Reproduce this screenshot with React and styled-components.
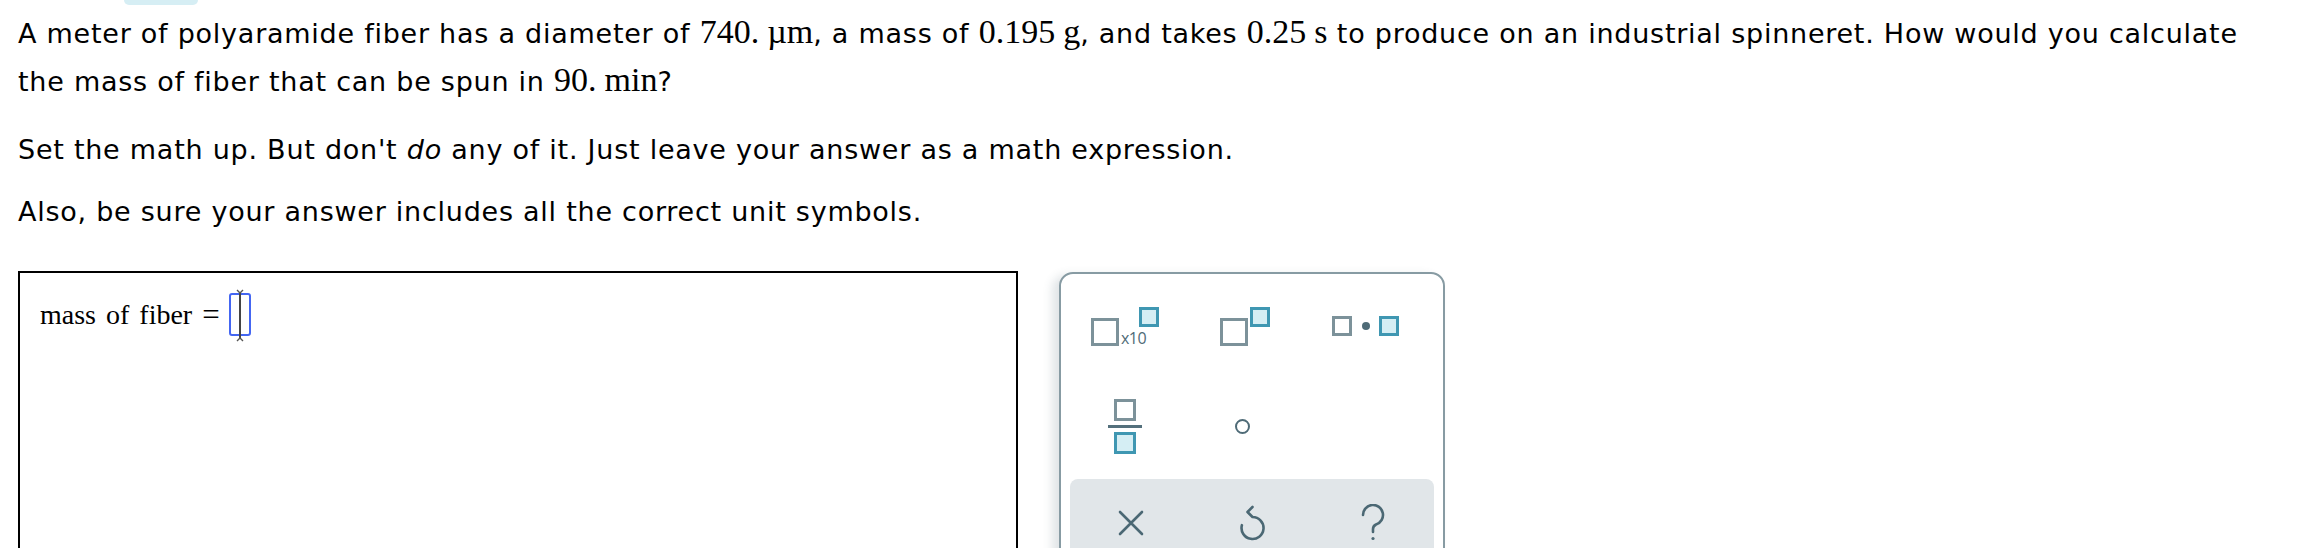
import React from 'react';
import styled, { createGlobalStyle } from 'styled-components';

const GlobalStyle = createGlobalStyle`
  html, body {
    margin: 0;
    padding: 0;
    background: #ffffff;
  }
  body {
    font-family: "DejaVu Sans", Verdana, sans-serif;
    color: #000;
  }
`;

const Page = styled.div`
  width: 2322px;
  height: 548px;
  box-sizing: border-box;
  padding-left: 18px;
  overflow: hidden;
`;

const TopTab = styled.div`
  margin-left: 106px;
  width: 74px;
  height: 5px;
  background: #d6eef4;
  border-radius: 0 0 10px 10px;
`;

const Para = styled.p`
  margin: ${props => props.$top}px 0 0;
  max-width: 2245px;
  font-size: 27px;
  line-height: 48px;
  letter-spacing: 0.75px;
`;

const Num = styled.span`
  font-family: "Liberation Serif", "Times New Roman", serif;
  font-size: 34px;
  line-height: 1;
  letter-spacing: 0;
`;

const Unit = styled(Num)`
  margin-left: 8px;
`;

const Workspace = styled.div`
  display: flex;
  align-items: flex-start;
  gap: 41px;
  margin-top: 35px;
`;

const AnswerBox = styled.div`
  width: 1000px;
  height: 320px;
  box-sizing: border-box;
  border: 2px solid #000;
  padding: 20px 20px;
`;

const MathLine = styled.div`
  display: flex;
  align-items: center;
  height: 43px;
  font-family: "Liberation Serif", "Times New Roman", serif;
  font-size: 28px;
  word-spacing: 3px;
`;

const Equals = styled.span`
  margin: 0 9px 0 10px;
  font-size: 31px;
`;

const Slot = styled.span`
  position: relative;
  display: block;
  width: 22px;
  height: 43px;
  box-sizing: border-box;
  border: 2px solid #4466f2;
  border-radius: 3px;
`;

const Caret = styled.svg`
  position: absolute;
  left: 3px;
  top: -6px;
`;

const Palette = styled.div`
  width: 386px;
  height: 320px;
  margin-top: 1px;
  box-sizing: border-box;
  border: 2px solid #879ba3;
  border-radius: 14px;
  padding: 2px 9px 0;
  background: #fff;
  box-shadow: -7px 3px 10px rgba(70, 95, 105, 0.16);
`;

const KeyGrid = styled.div`
  display: grid;
  grid-template-columns: repeat(3, 120px);
  grid-auto-rows: 100px;
  margin-left: -5px;
`;

const Key = styled.div`
  display: flex;
  align-items: center;
  justify-content: center;
`;

const Group = styled.div`
  display: flex;
  align-items: ${props => props.$align || 'flex-end'};
  flex-direction: ${props => props.$column ? 'column' : 'row'};
  gap: ${props => props.$gap || 0}px;
`;

const Box = styled.span`
  display: block;
  width: ${props => props.$size}px;
  height: ${props => props.$size}px;
  box-sizing: border-box;
  border: 3px solid ${props => props.$blue ? '#3f97b2' : '#7c929a'};
  background: ${props => props.$blue ? '#d5eef4' : '#fff'};
  margin-bottom: ${props => props.$raise || 0}px;
  margin-left: ${props => props.$shift || 0}px;
`;

const Times10 = styled.span`
  font-family: "Open Sans", "DejaVu Sans", sans-serif;
  font-size: 16px;
  line-height: 16px;
  color: #4f6b77;
  margin-left: 2px;
  letter-spacing: -0.5px;
`;

const Dot = styled.span`
  display: block;
  width: 8px;
  height: 8px;
  margin: 0 9px 0 10px;
  border-radius: 50%;
  background: #4f6b77;
`;

const FracBar = styled.span`
  display: block;
  width: 34px;
  height: 3px;
  background: #54707c;
`;

const Degree = styled.span`
  display: block;
  width: 15px;
  height: 15px;
  margin-right: 6px;
  box-sizing: border-box;
  border: 2.5px solid #4f6b77;
  border-radius: 50%;
`;

const Toolbar = styled.div`
  margin-top: 3px;
  height: 88px;
  background: #e1e6e9;
  border-radius: 8px;
  display: grid;
  grid-template-columns: repeat(3, 1fr);
  align-items: center;
  justify-items: center;
`;

const ToolIcon = styled.svg`
  display: block;
  fill: none;
  stroke: #4b6874;
  stroke-width: 2.6;
  stroke-linecap: round;
  stroke-linejoin: round;
`;

export default function App() {
  return (
    <Page>
      <GlobalStyle />
      <TopTab />
      <Para $top={5}>
        A meter of polyaramide fiber has a diameter of <Num>740.</Num><Unit>µm</Unit>, a mass
        of <Num>0.195</Num><Unit>g</Unit>, and takes <Num>0.25</Num><Unit>s</Unit> to produce on
        an industrial spinneret. How would you calculate the mass of fiber that can be spun
        in <Num>90.</Num><Unit>min</Unit>?
      </Para>
      <Para $top={20}>
        Set the math up. But don't <i>do</i> any of it. Just leave your answer as a math expression.
      </Para>
      <Para $top={14}>
        Also, be sure your answer includes all the correct unit symbols.
      </Para>

      <Workspace>
        <AnswerBox>
          <MathLine>
            <span>mass of fiber</span>
            <Equals>=</Equals>
            <Slot>
              <Caret width="12" height="53" viewBox="0 0 12 53">
                <path d="M6 3 V50" stroke="#444" strokeWidth="2" />
                <path d="M3 1 L6 4 L9 1 M3 52 L6 49 L9 52" stroke="#555" strokeWidth="1.4" fill="none" />
              </Caret>
            </Slot>
          </MathLine>
        </AnswerBox>

        <Palette>
          <KeyGrid>
            <Key>
              <Group>
                <Box $size={28} />
                <Times10>x10</Times10>
                <Box $size={20} $blue $raise={19} $shift={-7} />
              </Group>
            </Key>
            <Key>
              <Group>
                <Box $size={28} />
                <Box $size={20} $blue $raise={19} $shift={2} />
              </Group>
            </Key>
            <Key>
              <Group $align="center">
                <Box $size={20} />
                <Dot />
                <Box $size={20} $blue />
              </Group>
            </Key>
            <Key>
              <Group $column $align="center" $gap={4}>
                <Box $size={22} />
                <FracBar />
                <Box $size={22} $blue />
              </Group>
            </Key>
            <Key>
              <Degree />
            </Key>
            <Key />
          </KeyGrid>

          <Toolbar>
            <ToolIcon width="26" height="26" viewBox="0 0 26 26">
              <path d="M2 2 L24 24 M24 2 L2 24" />
            </ToolIcon>
            <ToolIcon width="28" height="38" viewBox="0 0 28 38">
              <path d="M14.5 3 L9.5 8 L14.5 13 A11 11 0 1 1 3.9 21.2" />
            </ToolIcon>
            <ToolIcon width="26" height="38" viewBox="0 0 26 38">
              <path d="M3 11 A10 10 0 1 1 16 20.5 Q13 22 13 25 V28" />
              <circle cx="13" cy="34.5" r="1.6" fill="#4b6874" stroke="none" />
            </ToolIcon>
          </Toolbar>
        </Palette>
      </Workspace>
    </Page>
  );
}
